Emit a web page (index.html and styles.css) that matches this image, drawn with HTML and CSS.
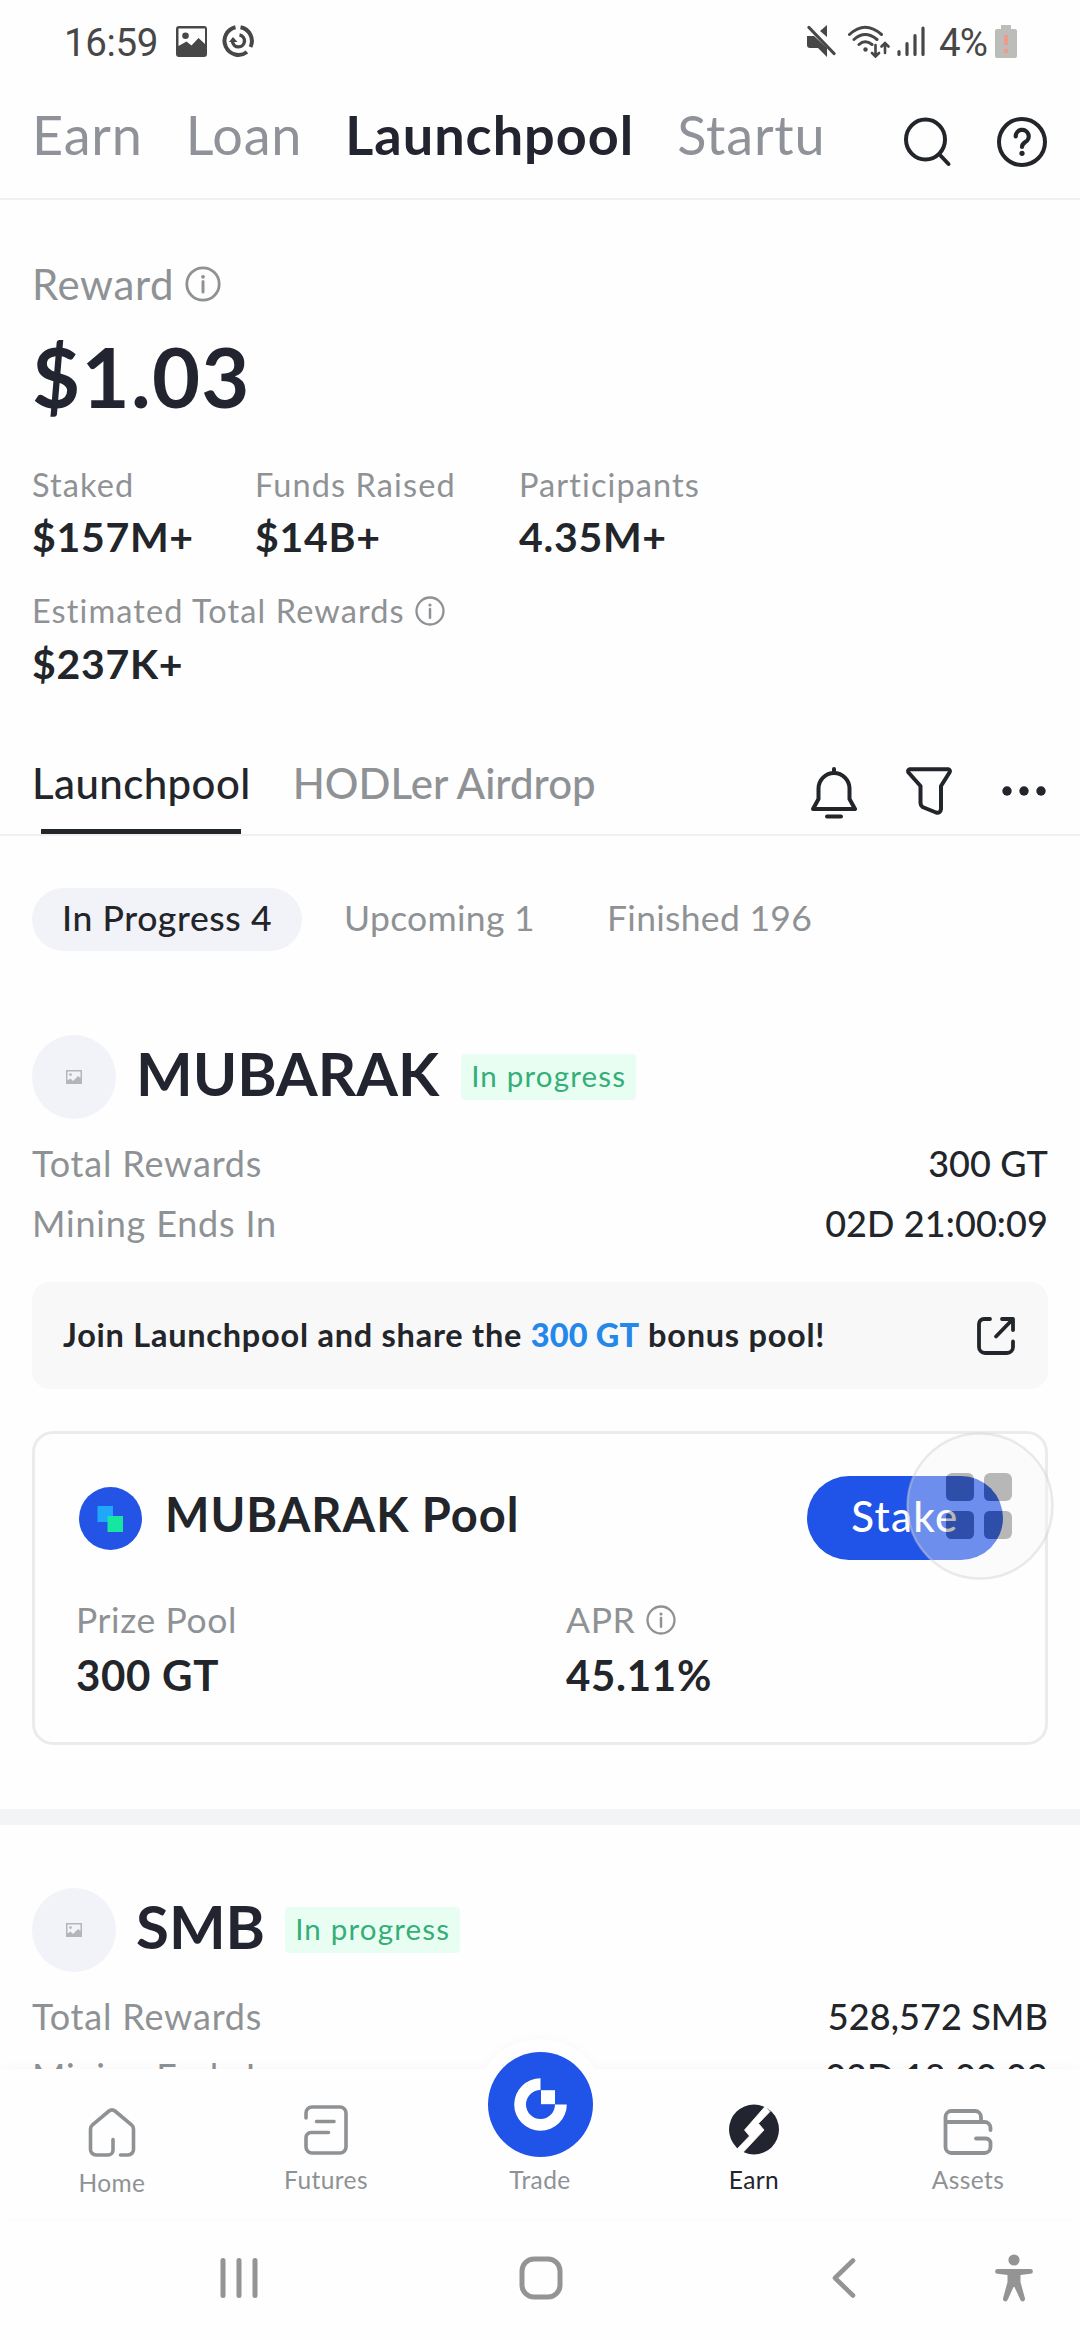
FILE: index.html
```html
<!DOCTYPE html>
<html lang="en">
<head>
<meta charset="utf-8">
<title>Launchpool</title>
<link rel="stylesheet" href="styles.css">
</head>
<body>
<svg class="defs" width="0" height="0">
  <symbol id="info" viewBox="0 0 36 36"><circle cx="18" cy="18" r="16.2" fill="none" stroke="currentColor" stroke-width="2.8"/><circle cx="18" cy="10.8" r="1.9" fill="currentColor"/><path d="M18 15.5v10.5" stroke="currentColor" stroke-width="3" stroke-linecap="round"/></symbol>
  <symbol id="thumb" viewBox="0 0 16 14"><path fill-rule="evenodd" d="M0 0h16v14H0zM1.5 1.5v9l3-2 2.500 2.500 5-5 2.500 2v-6.500zM4.500 3.200a1.400 1.400 0 1 1 0 2.800 1.400 1.400 0 0 1 0-2.800z" fill="#b4b5b9"/></symbol>
</svg>

<div class="screen">
  <div class="statusbar">
    <span class="clock">16:59</span>
    <svg class="st-image" width="31" height="31" viewBox="0 0 31 31"><path fill="#474747" fill-rule="evenodd" d="M3 0h25a3 3 0 0 1 3 3v25a3 3 0 0 1-3 3H3a3 3 0 0 1-3-3V3a3 3 0 0 1 3-3zM2.500 2.500v17.500l8-4.500 5 4 7-7.500 6.500 6V2.500zM9.500 6.500a3.300 3.300 0 1 1 0 6.600 3.300 3.300 0 0 1 0-6.600z"/></svg>
    <svg class="st-sync" width="32" height="32" viewBox="0 0 32 32" fill="none" stroke="#474747"><path d="M13.500 2.200A14 14 0 1 0 25 27" stroke-width="4"/><path d="M18.500 2.200A14 14 0 0 1 28.500 22" stroke-width="4"/><path d="M17.500 10a6 6 0 1 1-7 6.500" stroke-width="3.400"/><path d="M7 17l4-5 4.500 5z" fill="#474747" stroke="none"/></svg>
    <div class="st-right">
      <svg width="29" height="32" viewBox="0 0 29 32"><path fill="#474747" d="M0 11h7l13 12v9l-9-9H3a3 3 0 0 1-3-3zM20 0v12l-7-6z"/><path d="M2 2.500l25 26" stroke="#474747" stroke-width="3.200" stroke-linecap="round"/></svg>
      <svg class="st-wifi" width="42" height="33" viewBox="0 0 42 33" fill="none" stroke="#474747" stroke-width="3" stroke-linecap="round"><path d="M1.500 9.500Q17-5 33.500 9.500M6 14.500Q17 4.500 29 14.500M11 19.500Q17 14 24 19.500"/><circle cx="17.500" cy="24.500" r="2.200" fill="#474747" stroke="none"/><path d="M27.500 20v11M24 28l3.500 3.500L31 28M37 28V18.500M33.500 21.500L37 18l3.500 3.500" stroke-width="2.600"/></svg>
      <svg class="st-signal" width="28" height="32" viewBox="0 0 28 32" stroke="#474747" stroke-width="3.200" stroke-linecap="round"><path d="M2 26.500v3M10 18.500v11M18 10.500v19M26 3v26.500"/></svg>
      <span class="percent">4%</span>
      <svg class="st-batt" width="22" height="33" viewBox="0 0 22 33"><path fill="#bcbcb8" d="M6 0h10v4h4a2 2 0 0 1 2 2v25a2 2 0 0 1-2 2H2a2 2 0 0 1-2-2V6a2 2 0 0 1 2-2h4z"/><path d="M11 10v10M11 24v4" stroke="#ef9a8c" stroke-width="4"/></svg>
    </div>
  </div>

  <div class="header">
    <div class="maintabs"><span>Earn</span><span>Loan</span><span class="on">Launchpool</span><span>Startu</span></div>
    <div class="header-icons">
      <svg width="48" height="50" viewBox="0 0 48 50" fill="none" stroke="#222529" stroke-width="4"><ellipse cx="21.500" cy="22.500" rx="19.500" ry="20"/><path d="M36 38l8.500 9" stroke-linecap="round"/></svg>
      <svg width="50" height="50" viewBox="0 0 50 50" fill="none" stroke="#222529" stroke-width="4"><circle cx="25" cy="25" r="23"/><path d="M18.700 19.500a6.500 6.500 0 1 1 9.500 5.600c-2.300 1.400-3.200 2.300-3.200 4.900" stroke-width="4.200" stroke-linecap="round"/><circle cx="25" cy="36.300" r="2.600" fill="#222529" stroke="none"/></svg>
    </div>
  </div>

  <div class="content">
    <div class="hero">
      <div class="reward">Reward <svg width="36" height="36"><use href="#info"/></svg></div>
      <div class="amount">$1.03</div>
      <div class="stats">
        <div><div class="label">Staked</div><div class="value">$157M+</div></div>
        <div><div class="label">Funds Raised</div><div class="value">$14B+</div></div>
        <div><div class="label">Participants</div><div class="value">4.35M+</div></div>
      </div>
      <div class="estimate">
        <div class="label">Estimated Total Rewards <svg width="30" height="30"><use href="#info"/></svg></div>
        <div class="value">$237K+</div>
      </div>
    </div>

    <div class="subtabs">
      <div class="subtab on">Launchpool</div>
      <div class="subtab">HODLer Airdrop</div>
      <div class="tools">
        <svg width="46" height="52" viewBox="0 0 46 52" fill="none" stroke="#222529" stroke-width="4" stroke-linejoin="round" stroke-linecap="round"><path d="M23 2v4M7.500 32V21.500a15.500 15.500 0 0 1 31 0V32L44 42H2z"/><path d="M16 49.500h14"/></svg>
        <svg width="46" height="48" viewBox="0 0 46 48" fill="none" stroke="#222529" stroke-width="4" stroke-linejoin="round"><path d="M3.500 2.200h39q2.200 1 1 3.300L35 19v23q-.5 4.500-5 3.500L16.500 40q-2-1.500-2-4V19L2.500 5.500q-1.200-2.300 1-3.300z"/></svg>
        <svg width="46" height="48" viewBox="0 0 46 48" fill="#222529"><circle cx="6" cy="24" r="4.700"/><circle cx="23" cy="24" r="4.700"/><circle cx="40" cy="24" r="4.700"/></svg>
      </div>
    </div>

    <div class="filters"><span class="on">In Progress 4</span><span>Upcoming 1</span><span>Finished 196</span></div>

    <div class="project">
      <div class="title"><i class="avatar"><svg width="16" height="14"><use href="#thumb"/></svg></i><b>MUBARAK</b><span class="badge">In progress</span></div>
      <div class="row"><span>Total Rewards</span><em>300 GT</em></div>
      <div class="row"><span>Mining Ends In</span><em>02D 21:00:09</em></div>
      <div class="banner">
        <p>Join Launchpool and share the <strong>300 GT</strong> bonus pool!</p>
        <svg width="38" height="38" viewBox="0 0 38 38" fill="none" stroke="#222529" stroke-width="3.800" stroke-linecap="round" stroke-linejoin="round"><path d="M13 2H7a5 5 0 0 0-5 5v23a6 6 0 0 0 6 6h22a6 6 0 0 0 6-6v-5.500M25 2h11v11M35 3L19 19.500"/></svg>
      </div>
      <div class="pool">
        <div class="pool-head">
          <svg width="63" height="63" viewBox="0 0 63 63"><circle cx="31.500" cy="31.500" r="31.500" fill="#2354e6"/><path d="M18.500 19H34v16H18.500z" fill="#1fa8fb"/><path d="M28.500 29H44v16H28.500z" fill="#17e6a1"/></svg>
          <h3>MUBARAK Pool</h3>
          <div class="stake">Stake</div>
          <svg class="assist" width="148" height="148" viewBox="0 0 148 148"><path fill="rgba(247,247,247,.36)" fill-rule="evenodd" d="M74 1a73 73 0 1 1 0 146A73 73 0 0 1 74 1zM46 41q-6 0-6 6v16q0 6 6 6h16q6 0 6-6V47q0-6-6-6zM84 41q-6 0-6 6v16q0 6 6 6h16q6 0 6-6V47q0-6-6-6zM46 79q-6 0-6 6v16q0 6 6 6h16q6 0 6-6V85q0-6-6-6zM84 79q-6 0-6 6v16q0 6 6 6h16q6 0 6-6V85q0-6-6-6z"/><circle cx="74" cy="74" r="72.500" fill="none" stroke="rgba(205,205,205,.4)" stroke-width="2.500"/><g fill="rgba(70,70,70,.386)"><rect x="40" y="41" width="28" height="28" rx="6"/><rect x="78" y="41" width="28" height="28" rx="6"/><rect x="40" y="79" width="28" height="28" rx="6"/><rect x="78" y="79" width="28" height="28" rx="6"/></g></svg>
        </div>
        <div class="pool-stats">
          <div><div class="plabel">Prize Pool</div><div class="pvalue">300 GT</div></div>
          <div><div class="plabel">APR <svg width="30" height="30"><use href="#info"/></svg></div><div class="pvalue">45.11%</div></div>
        </div>
      </div>
    </div>

    <div class="divider"></div>

    <div class="project second">
      <div class="title"><i class="avatar"><svg width="16" height="14"><use href="#thumb"/></svg></i><b>SMB</b><span class="badge">In progress</span></div>
      <div class="row"><span>Total Rewards</span><em>528,572 SMB</em></div>
      <div class="row"><span>Mining Ends In</span><em>02D 18:00:09</em></div>
    </div>
  </div>

  <div class="tabbar">
    <div class="tab home">
      <svg width="48" height="50" viewBox="0 0 48 50" fill="none" stroke="#8f9295" stroke-width="3.600" stroke-linecap="round" stroke-linejoin="round"><path d="M32.500 47H40a5.500 5.500 0 0 0 5.500-5.500V21q0-2.500-2-4.200L27 3q-3-2.300-6 0L4.500 16.800q-2 1.700-2 4.200v20.500A5.500 5.500 0 0 0 8 47h12a5 5 0 0 0 5-5V31.500"/></svg>
      <span>Home</span>
    </div>
    <div class="tab">
      <svg width="44" height="50" viewBox="0 0 44 50" fill="none" stroke="#8f9295" stroke-width="3.600" stroke-linecap="round"><path d="M2 13V8a6 6 0 0 1 6-6h28a6 6 0 0 1 6 6v34a6 6 0 0 1-6 6H8a6 6 0 0 1-6-6V32.500a5 5 0 0 1 5-5h17.500M12.500 16.500H30"/></svg>
      <span>Futures</span>
    </div>
    <div class="tab trade">
      <svg width="105" height="105" viewBox="0 0 105 105"><circle cx="52.500" cy="52.500" r="52.500" fill="#2053e7"/><path d="M52.500 26.200a26.300 26.300 0 1 0 26.300 26.300H67A14.500 14.500 0 1 1 52.500 38z" fill="#fff"/><path d="M53 38.200h14v14H53z" fill="#fff"/></svg>
      <span>Trade</span>
    </div>
    <div class="tab on">
      <svg width="50" height="51" viewBox="0 0 50 51"><circle cx="25" cy="25.500" r="25" fill="#22252f"/><path d="M36 2.500l5 5L29.500 19.500l5.500 6.500L13.500 49l-5-4.500L20.500 32 15.500 26z" fill="#fff" stroke="#fff" stroke-width=".8" stroke-linejoin="round"/></svg>
      <span>Earn</span>
    </div>
    <div class="tab">
      <svg width="50" height="46" viewBox="0 0 50 46" fill="none" stroke="#8f9295" stroke-width="3.800" stroke-linecap="round"><path d="M2.500 14V8a6 6 0 0 1 6-6H32a6 6 0 0 1 6 6v5M47.500 21v-2a6 6 0 0 0-6-6H2.500v25a6 6 0 0 0 6 6h33a6 6 0 0 0 6-6v-4a4.500 4.500 0 0 0-4.500-4.500H33"/></svg>
      <span>Assets</span>
    </div>
  </div>

  <div class="sysnav">
    <svg width="40" height="44" viewBox="0 0 40 44" stroke="#949494" stroke-width="5" stroke-linecap="round"><path d="M4 4.500v35M20 4.500v35M36 4.500v35"/></svg>
    <svg width="44" height="44" viewBox="0 0 44 44" fill="none" stroke="#949494" stroke-width="5"><rect x="3" y="3" width="38" height="38" rx="12"/></svg>
    <svg width="26" height="44" viewBox="0 0 26 44" fill="none" stroke="#949494" stroke-width="4.600" stroke-linecap="round" stroke-linejoin="round"><path d="M22 4.500L4 22l18 17.500"/></svg>
    <svg width="38" height="48" viewBox="0 0 38 48" fill="#949494"><circle cx="19" cy="6" r="5.600"/><path d="M2.500 15h33a2.400 2.400 0 0 1 0 4.800L25.500 21v7L30 44.500q.3 2.500-2 3-2 .3-2.800-2L19.500 33h-1l-5.700 12.500q-.8 2.300-2.800 2-2.300-.5-2-3L12.500 28v-7l-10-1.200a2.400 2.400 0 0 1 0-4.800z"/></svg>
  </div>
</div>
</body>
</html>
```
FILE: styles.css
```css
* { box-sizing: border-box; }
body { margin: 0; background: #fefefe; color: #222529; font-family: Lato, "Open Sans", sans-serif; font-variant-ligatures: none; }
svg { display: block; flex: none; }
.defs { position: absolute; }
.screen { width: 1080px; height: 2340px; display: flex; flex-direction: column; overflow: hidden; white-space: nowrap; }

.statusbar { height: 84px; flex: none; display: flex; align-items: center; padding: 0 63px 2px 64px; font: 400 38.5px Roboto, sans-serif; color: #474747; }
.clock { width: 112px; letter-spacing: -0.4px; margin-top: 3px; }
.st-sync { margin-left: 15px; }
.st-right { margin-left: auto; display: flex; align-items: center; }
.st-wifi { margin-left: 12px; }
.st-signal { margin-left: 7px; }
.percent { margin: 3px 0 0 14px; width: 56px; letter-spacing: -1px; }

.header { height: 116px; flex: none; display: flex; justify-content: space-between; padding: 0 33px 0 32px; border-bottom: 2px solid #f0f0f1; }
.maintabs { display: flex; gap: 43px; padding-top: 1px; font-size: 54px; line-height: 100px; letter-spacing: .8px; color: #8f9298; }
.maintabs .on { font-weight: 700; letter-spacing: 1px; color: #222430; }
.header-icons { display: flex; gap: 45px; padding-top: 33px; }

.content { flex: 1; min-height: 0; overflow: hidden; }
.hero { padding: 59px 32px 0; }
.reward { display: flex; align-items: center; gap: 11px; font-size: 42px; line-height: 50px; letter-spacing: .6px; color: #8f9295; }
.amount { margin-top: 16px; font-size: 83px; font-weight: 700; line-height: 102px; letter-spacing: 1.3px; margin-bottom: -2px; color: #222430; }
.stats { display: grid; grid-template-columns: 223px 264px auto; margin-top: 39px; }
.label { display: flex; align-items: center; gap: 10px; font-size: 32.5px; line-height: 41px; margin-bottom: -1px; letter-spacing: 1.1px; color: #8f9295; }
.value { margin-top: 7px; font-size: 41px; font-weight: 700; line-height: 50px; letter-spacing: .7px; }
.stats .value { padding-top: 1px; margin-bottom: -1px; }
.estimate { margin-top: 29px; }
.estimate .value { margin-top: 9px; }

.subtabs { height: 147px; display: flex; gap: 42px; padding: 69px 33px 0 32px; border-bottom: 2px solid #f0f0f1; font-size: 42px; font-weight: 500; line-height: 50px; color: #8f9295; }
.subtab.on { color: #222529; letter-spacing: .4px; }
.subtab.on::after { content: ""; display: block; width: 200px; height: 5px; margin: 21px auto 0; background: #222529; }
.tools { display: flex; gap: 49px; margin-left: auto; padding-top: 9px; }

.filters { display: flex; gap: 12px; margin: 52px 32px 0; font-size: 35.5px; line-height: 59px; letter-spacing: .3px; color: #8f9295; }
.filters span { height: 63px; padding: 0 30px; border-radius: 32px; }
.filters .on { background: #f2f3f8; color: #222529; font-weight: 500; letter-spacing: .6px; }

.project { padding: 84px 32px 0; }
.project.second { padding-top: 63px; }
.title { height: 84px; display: flex; align-items: center; margin-bottom: 14px; }
.avatar { width: 84px; height: 84px; border-radius: 50%; background: #f2f3f8; display: flex; align-items: center; justify-content: center; }
.title b { margin: 0 22px 0 20px; padding-bottom: 9px; font-size: 60px; line-height: 74px; color: #222430; }
.second .title b { margin-right: 20px; }
.badge { height: 46px; padding: 0 10px; border-radius: 4px; background: #e9fef2; color: #35ae78; font-size: 29.5px; line-height: 43px; letter-spacing: 1.2px; }
.row { display: flex; justify-content: space-between; font-size: 36px; line-height: 60px; letter-spacing: .8px; color: #8f9295; }
.row em { font-style: normal; font-weight: 500; letter-spacing: .1px; color: #222529; }

.banner { height: 107px; margin-top: 29px; padding: 0 33px 0 31px; border-radius: 18px; background: #f8f8f9; display: flex; align-items: center; justify-content: space-between; }
.banner p { margin: 0; padding-bottom: 3px; font-size: 32.5px; font-weight: 700; letter-spacing: .75px; }
.banner strong { color: #2487ea; letter-spacing: .2px; }

.pool { height: 314px; margin-top: 42px; padding: 42px 42px 0 41px; border: 3px solid #ebebeb; border-radius: 21px; }
.pool-head { position: relative; height: 84px; display: flex; align-items: center; padding-left: 3px; }
.pool-head h3 { margin: 0 0 0 23px; padding-bottom: 8px; font-size: 47px; font-weight: 700; letter-spacing: 1px; }
.stake { width: 196px; height: 84px; margin-left: auto; border-radius: 42px; background: #2053e7; color: #fff; font-size: 42px; font-weight: 500; line-height: 80px; letter-spacing: 1.3px; text-align: center; }
.assist { position: absolute; right: -51px; top: -44px; }
.pool-stats { display: grid; grid-template-columns: 490px auto; margin-top: 38px; }
.plabel { display: flex; align-items: center; gap: 11px; font-size: 35.5px; line-height: 44px; letter-spacing: .6px; color: #8f9295; }
.pvalue { margin-top: 8px; font-size: 42px; font-weight: 700; line-height: 50px; letter-spacing: .7px; }
.divider { height: 16px; margin-top: 64px; background: #f3f4f6; }

.tabbar { position: relative; height: 149px; flex: none; display: grid; grid-template-columns: repeat(5, 214px); padding-left: 5px; background: #fefefe; box-shadow: 0 -2px 12px rgba(0, 0, 0, .025); }
.tab { display: flex; flex-direction: column; align-items: center; justify-content: flex-end; height: 126px; font-size: 24.5px; line-height: 30px; letter-spacing: .4px; color: #8f9295; }
.tab span { margin-top: 10px; }
.tab.on { color: #222529; }
.tab.home { height: 129px; }
.trade { position: relative; }
.trade::before { content: ""; position: absolute; top: -30px; left: 41px; width: 132px; height: 132px; border-radius: 50%; background: #fefefe; box-shadow: 0 -3px 8px rgba(0, 0, 0, .02); clip-path: inset(-12px -12px 102px -12px); }
.trade svg { position: relative; }
.trade span { margin-top: 8px; }

.sysnav { flex: none; height: 122px; display: flex; align-items: center; padding: 0 47px 2px 219px; }
.sysnav svg:nth-child(2) { margin-left: 260px; }
.sysnav svg:nth-child(3) { margin-left: 268px; }
.sysnav svg:nth-child(4) { margin-left: auto; }
```
